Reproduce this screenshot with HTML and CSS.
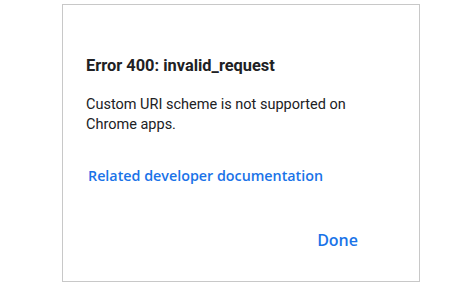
FILE: index.html
```html
<!DOCTYPE html>
<html lang="en">
<head>
    <meta charset="UTF-8">
    <meta name="viewport" content="width=device-width, initial-scale=1.0">
    <title>Error 400: invalid_request</title>
    <link rel="stylesheet" href="styles.css">
</head>
<body>

<div class="dialog">
    <h1 class="title">Error 400: invalid_request</h1>
    <p class="message">Custom URI scheme is not supported on Chrome apps.</p>
    <a class="doc-link" href="#">Related developer documentation</a>
    <div class="actions">
        <button class="done">Done</button>
    </div>
</div>

</body>
</html>
```

FILE: styles.css
```css
body {
    margin: 0;
    background-color: #fff;
    font-family: Roboto, Arial, sans-serif;
}
.dialog {
    box-sizing: border-box;
    width: 358px;
    height: 278px;
    margin: 4px 0 0 62px;
    padding: 50px 24px 0 23px;
    border: 1px solid #c8c8c8;
    display: flex;
    flex-direction: column;
}
.title {
    margin: 0;
    font-size: 16.4px;
    font-weight: 700;
    line-height: 22px;
    color: #202124;
}
.message {
    margin: 18px 0 0 0;
    width: 280px;
    font-size: 14.5px;
    line-height: 20px;
    color: #202124;
}
.doc-link {
    margin: 31px 0 0 2px;
    font-family: "Open Sans", Roboto, sans-serif;
    font-size: 14.3px;
    font-weight: 600;
    line-height: 20px;
    color: #1a73e8;
    text-decoration: none;
}
.actions {
    display: flex;
    justify-content: flex-end;
    margin-top: 43px;
    padding-right: 37px;
}
.done {
    padding: 0;
    border: none;
    background: none;
    font-family: "Open Sans", Roboto, sans-serif;
    font-size: 16px;
    font-weight: 600;
    color: #1a73e8;
    cursor: pointer;
}
```
